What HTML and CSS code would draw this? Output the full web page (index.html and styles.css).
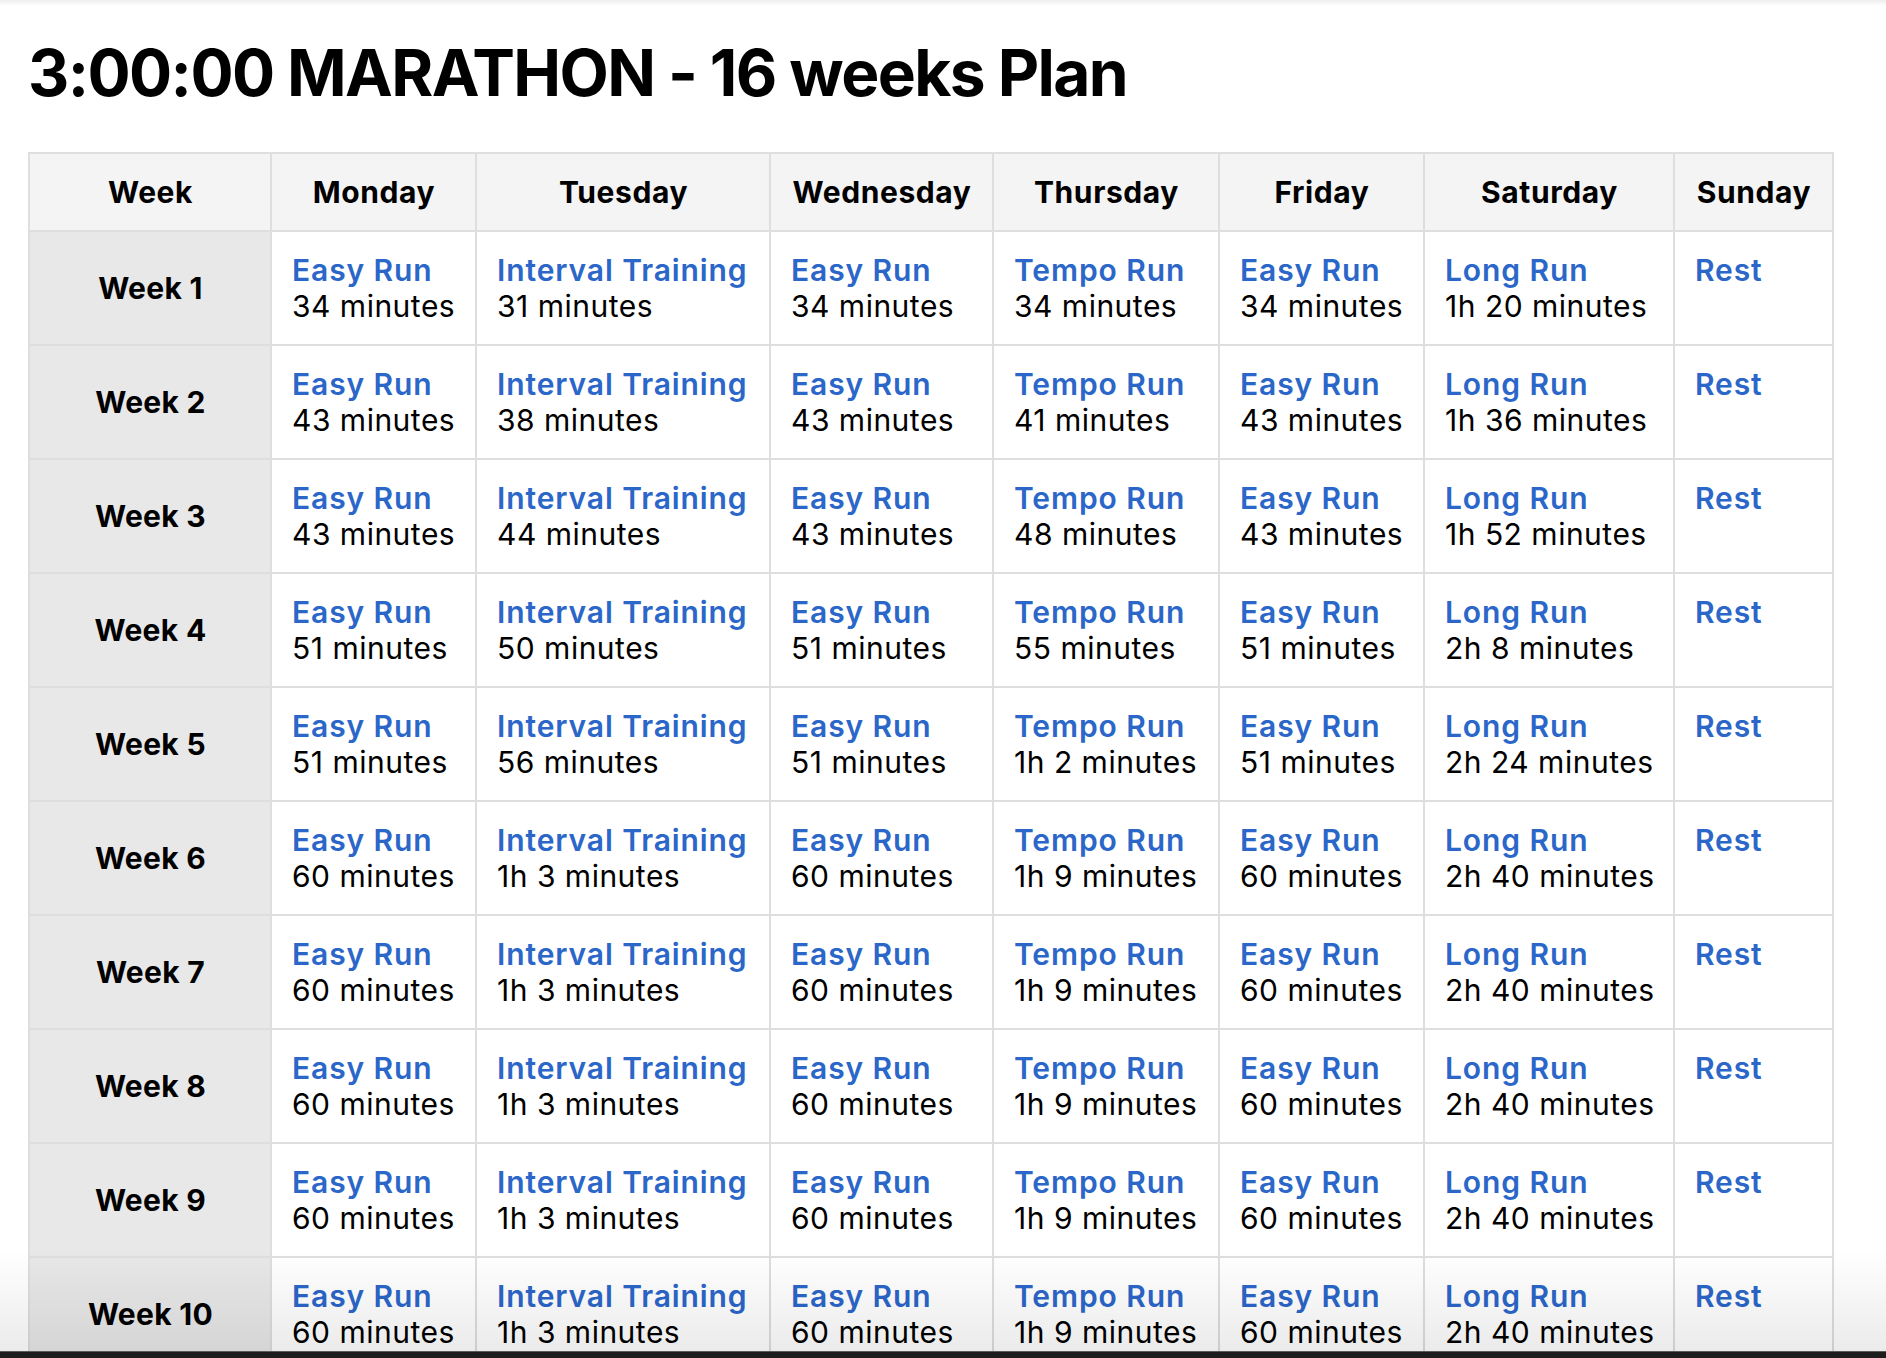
FILE: index.html
```html
<!DOCTYPE html>
<html lang="en">
<head>
<meta charset="utf-8">
<title>3:00:00 MARATHON - 16 weeks Plan</title>
<link rel="stylesheet" href="styles.css">
</head>
<body>
<main class="page">
  <h1 class="title">3:00:00 MARATHON - 16 weeks Plan</h1>
  <table class="plan">
    <colgroup>
      <col class="c-week"><col class="c-mon"><col class="c-tue"><col class="c-wed"><col class="c-thu"><col class="c-fri"><col class="c-sat"><col class="c-sun">
    </colgroup>
    <thead>
      <tr><th>Week</th><th>Monday</th><th>Tuesday</th><th>Wednesday</th><th>Thursday</th><th>Friday</th><th>Saturday</th><th>Sunday</th></tr>
    </thead>
    <tbody>
      <tr><th class="wk">Week 1</th>
        <td><span class="type">Easy Run</span><span class="dur">34 minutes</span></td>
        <td><span class="type">Interval Training</span><span class="dur">31 minutes</span></td>
        <td><span class="type">Easy Run</span><span class="dur">34 minutes</span></td>
        <td><span class="type">Tempo Run</span><span class="dur">34 minutes</span></td>
        <td><span class="type">Easy Run</span><span class="dur">34 minutes</span></td>
        <td><span class="type">Long Run</span><span class="dur">1h 20 minutes</span></td>
        <td><span class="type">Rest</span></td></tr>
      <tr><th class="wk">Week 2</th>
        <td><span class="type">Easy Run</span><span class="dur">43 minutes</span></td>
        <td><span class="type">Interval Training</span><span class="dur">38 minutes</span></td>
        <td><span class="type">Easy Run</span><span class="dur">43 minutes</span></td>
        <td><span class="type">Tempo Run</span><span class="dur">41 minutes</span></td>
        <td><span class="type">Easy Run</span><span class="dur">43 minutes</span></td>
        <td><span class="type">Long Run</span><span class="dur">1h 36 minutes</span></td>
        <td><span class="type">Rest</span></td></tr>
      <tr><th class="wk">Week 3</th>
        <td><span class="type">Easy Run</span><span class="dur">43 minutes</span></td>
        <td><span class="type">Interval Training</span><span class="dur">44 minutes</span></td>
        <td><span class="type">Easy Run</span><span class="dur">43 minutes</span></td>
        <td><span class="type">Tempo Run</span><span class="dur">48 minutes</span></td>
        <td><span class="type">Easy Run</span><span class="dur">43 minutes</span></td>
        <td><span class="type">Long Run</span><span class="dur">1h 52 minutes</span></td>
        <td><span class="type">Rest</span></td></tr>
      <tr><th class="wk">Week 4</th>
        <td><span class="type">Easy Run</span><span class="dur">51 minutes</span></td>
        <td><span class="type">Interval Training</span><span class="dur">50 minutes</span></td>
        <td><span class="type">Easy Run</span><span class="dur">51 minutes</span></td>
        <td><span class="type">Tempo Run</span><span class="dur">55 minutes</span></td>
        <td><span class="type">Easy Run</span><span class="dur">51 minutes</span></td>
        <td><span class="type">Long Run</span><span class="dur">2h 8 minutes</span></td>
        <td><span class="type">Rest</span></td></tr>
      <tr><th class="wk">Week 5</th>
        <td><span class="type">Easy Run</span><span class="dur">51 minutes</span></td>
        <td><span class="type">Interval Training</span><span class="dur">56 minutes</span></td>
        <td><span class="type">Easy Run</span><span class="dur">51 minutes</span></td>
        <td><span class="type">Tempo Run</span><span class="dur">1h 2 minutes</span></td>
        <td><span class="type">Easy Run</span><span class="dur">51 minutes</span></td>
        <td><span class="type">Long Run</span><span class="dur">2h 24 minutes</span></td>
        <td><span class="type">Rest</span></td></tr>
      <tr><th class="wk">Week 6</th>
        <td><span class="type">Easy Run</span><span class="dur">60 minutes</span></td>
        <td><span class="type">Interval Training</span><span class="dur">1h 3 minutes</span></td>
        <td><span class="type">Easy Run</span><span class="dur">60 minutes</span></td>
        <td><span class="type">Tempo Run</span><span class="dur">1h 9 minutes</span></td>
        <td><span class="type">Easy Run</span><span class="dur">60 minutes</span></td>
        <td><span class="type">Long Run</span><span class="dur">2h 40 minutes</span></td>
        <td><span class="type">Rest</span></td></tr>
      <tr><th class="wk">Week 7</th>
        <td><span class="type">Easy Run</span><span class="dur">60 minutes</span></td>
        <td><span class="type">Interval Training</span><span class="dur">1h 3 minutes</span></td>
        <td><span class="type">Easy Run</span><span class="dur">60 minutes</span></td>
        <td><span class="type">Tempo Run</span><span class="dur">1h 9 minutes</span></td>
        <td><span class="type">Easy Run</span><span class="dur">60 minutes</span></td>
        <td><span class="type">Long Run</span><span class="dur">2h 40 minutes</span></td>
        <td><span class="type">Rest</span></td></tr>
      <tr><th class="wk">Week 8</th>
        <td><span class="type">Easy Run</span><span class="dur">60 minutes</span></td>
        <td><span class="type">Interval Training</span><span class="dur">1h 3 minutes</span></td>
        <td><span class="type">Easy Run</span><span class="dur">60 minutes</span></td>
        <td><span class="type">Tempo Run</span><span class="dur">1h 9 minutes</span></td>
        <td><span class="type">Easy Run</span><span class="dur">60 minutes</span></td>
        <td><span class="type">Long Run</span><span class="dur">2h 40 minutes</span></td>
        <td><span class="type">Rest</span></td></tr>
      <tr><th class="wk">Week 9</th>
        <td><span class="type">Easy Run</span><span class="dur">60 minutes</span></td>
        <td><span class="type">Interval Training</span><span class="dur">1h 3 minutes</span></td>
        <td><span class="type">Easy Run</span><span class="dur">60 minutes</span></td>
        <td><span class="type">Tempo Run</span><span class="dur">1h 9 minutes</span></td>
        <td><span class="type">Easy Run</span><span class="dur">60 minutes</span></td>
        <td><span class="type">Long Run</span><span class="dur">2h 40 minutes</span></td>
        <td><span class="type">Rest</span></td></tr>
      <tr><th class="wk">Week 10</th>
        <td><span class="type">Easy Run</span><span class="dur">60 minutes</span></td>
        <td><span class="type">Interval Training</span><span class="dur">1h 3 minutes</span></td>
        <td><span class="type">Easy Run</span><span class="dur">60 minutes</span></td>
        <td><span class="type">Tempo Run</span><span class="dur">1h 9 minutes</span></td>
        <td><span class="type">Easy Run</span><span class="dur">60 minutes</span></td>
        <td><span class="type">Long Run</span><span class="dur">2h 40 minutes</span></td>
        <td><span class="type">Rest</span></td></tr>
    </tbody>
  </table>
</main>
<div class="shade-top"></div>
<div class="shade-bottom"></div>
<div class="dock-bar"></div>
</body>
</html>
```
FILE: styles.css
```css
html, body {
  margin: 0;
  padding: 0;
  background: #ffffff;
  overflow: hidden;
  height: 100%;
}

body {
  font-family: Inter, "Liberation Sans", Arial, sans-serif;
  color: #000000;
}

.page {
  padding: 35px 0 0 28px;
}

.title {
  margin: 0 0 41px 0;
  font-size: 64px;
  line-height: 76px;
  font-weight: 700;
  letter-spacing: -1.6px;
}

.plan {
  table-layout: fixed;
  border-collapse: separate;
  border-spacing: 0;
  width: 1806px;
  border-top: 2px solid #dedede;
  border-left: 2px solid #dedede;
}

.c-week { width: 242px; }
.c-mon { width: 205px; }
.c-tue { width: 294px; }
.c-wed { width: 223px; }
.c-thu { width: 226px; }
.c-fri { width: 205px; }
.c-sat { width: 250px; }
.c-sun { width: 159px; }

.plan th,
.plan td {
  box-sizing: border-box;
  border-right: 2px solid #dedede;
  border-bottom: 2px solid #dedede;
  padding: 20px 19px 20px 20px;
  font-size: 30px;
  line-height: 36px;
  white-space: nowrap;
}

.plan thead th {
  background: #f4f4f4;
  font-weight: 700;
  text-align: center;
  vertical-align: middle;
  height: 78px;
  letter-spacing: 0.6px;
}

.plan tbody td {
  vertical-align: top;
  text-align: left;
  height: 114px;
  background: #ffffff;
}

.plan tbody .wk {
  background: #e8e8e8;
  font-weight: 700;
  text-align: center;
  vertical-align: middle;
  letter-spacing: 0.3px;
}

.type {
  display: block;
  color: #2b66c9;
  font-weight: 600;
  letter-spacing: 0.9px;
}

.dur {
  display: block;
  color: #000000;
  font-weight: 400;
  letter-spacing: 0.5px;
}

.shade-top {
  position: fixed;
  left: 0;
  right: 0;
  top: 0;
  height: 6px;
  background: linear-gradient(to bottom, rgba(0,0,0,0.07), rgba(0,0,0,0));
  pointer-events: none;
}

.shade-bottom {
  position: fixed;
  left: 0;
  right: 0;
  top: 1250px;
  height: 101px;
  background: linear-gradient(to bottom, rgba(0,0,0,0), rgba(0,0,0,0.08));
  pointer-events: none;
}

.dock-bar {
  position: fixed;
  left: 0;
  right: 0;
  top: 1351px;
  height: 7px;
  background: #1d1d1d;
  border-top: 1px solid #5a5a5a;
  box-sizing: border-box;
  pointer-events: none;
}
```
